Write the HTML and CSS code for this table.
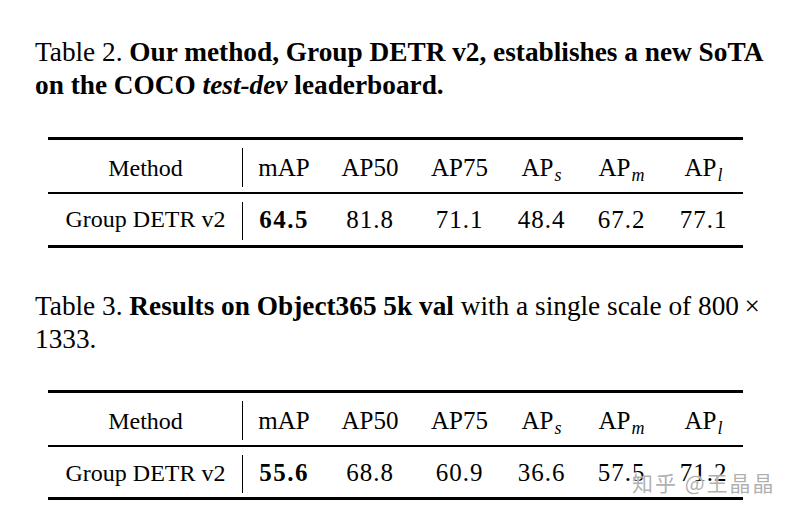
FILE: index.html
```html
<!DOCTYPE html>
<html lang="en">
<head>
<meta charset="utf-8">
<title>Group DETR v2 results</title>
<link rel="stylesheet" href="styles.css">
</head>
<body>
<main class="page">
  <section class="figure">
    <p class="caption">Table 2. <b>Our method, Group DETR v2, establishes a new SoTA<br>on the COCO <i>test-dev</i> leaderboard.</b></p>
    <div class="results">
      <div class="row head">
        <div class="cell method">Method</div>
        <div class="cell num">mAP</div>
        <div class="cell num">AP50</div>
        <div class="cell num">AP75</div>
        <div class="cell num">AP<sub>s</sub></div>
        <div class="cell num">AP<sub>m</sub></div>
        <div class="cell num">AP<sub>l</sub></div>
      </div>
      <div class="row body">
        <div class="cell method">Group DETR v2</div>
        <div class="cell num best">64.5</div>
        <div class="cell num">81.8</div>
        <div class="cell num">71.1</div>
        <div class="cell num">48.4</div>
        <div class="cell num">67.2</div>
        <div class="cell num">77.1</div>
      </div>
    </div>
  </section>

  <section class="figure second">
    <p class="caption">Table 3. <b>Results on Object365 5k val</b> with a single scale of 800&thinsp;×<br>1333.</p>
    <div class="results">
      <div class="row head">
        <div class="cell method">Method</div>
        <div class="cell num">mAP</div>
        <div class="cell num">AP50</div>
        <div class="cell num">AP75</div>
        <div class="cell num">AP<sub>s</sub></div>
        <div class="cell num">AP<sub>m</sub></div>
        <div class="cell num">AP<sub>l</sub></div>
      </div>
      <div class="row body short">
        <div class="cell method">Group DETR v2</div>
        <div class="cell num best">55.6</div>
        <div class="cell num">68.8</div>
        <div class="cell num">60.9</div>
        <div class="cell num">36.6</div>
        <div class="cell num">57.5</div>
        <div class="cell num">71.2</div>
      </div>
    </div>
  </section>

  <div class="watermark">知乎 @王晶晶</div>
</main>
</body>
</html>
```

FILE: styles.css
```css
html, body {
  margin: 0;
  padding: 0;
  background: #fff;
}

.page {
  position: relative;
  width: 802px;
  height: 518px;
  padding-top: 36px;
  box-sizing: border-box;
  overflow: hidden;
  color: #000;
  font-family: "Liberation Serif", "Times New Roman", serif;
}

.figure {
  margin: 0;
}

.figure.second {
  margin-top: 42px;
}

.caption {
  margin: 0 0 0 35px;
  font-size: 27.3px;
  line-height: 33px;
  white-space: nowrap;
}

.caption b {
  font-weight: bold;
}

.results {
  margin: 35px 0 0 48px;
  width: 695px;
  border-top: 3px solid #000;
  border-bottom: 3px solid #000;
}

.figure.second .results {
  margin-top: 34px;
}

.row {
  display: grid;
  grid-template-columns: 195px 82px 90px 89px 75px 85px 79px;
}

.row.head {
  height: 52px;
  border-bottom: 2px solid #000;
}

.row.body {
  height: 51px;
}

.row.body.short {
  height: 50px;
}

.cell {
  text-align: center;
  white-space: nowrap;
}

.head .cell {
  line-height: 52px;
  padding-top: 2px;
  height: 52px;
  box-sizing: border-box;
}

.body .cell {
  line-height: 51px;
}

.body.short .cell {
  line-height: 50px;
  padding-top: 1px;
}

.method {
  font-size: 24px;
  background: linear-gradient(#000, #000) right 0 top 8px / 1px calc(100% - 13px) no-repeat;
}

.head .method {
  background-position: right 0 top 8px;
  background-size: 1px 39px;
}

.body .method {
  background-position: right 0 top 8px;
  background-size: 1px 38px;
}

.num {
  font-size: 25px;
  letter-spacing: 1px;
}

.head .num {
  letter-spacing: 0;
}

.num.best {
  font-weight: bold;
  letter-spacing: 1.5px;
}

.num sub {
  font-size: 18px;
  font-style: italic;
  line-height: 0;
  vertical-align: -5px;
  letter-spacing: 0;
  margin-left: 1px;
}

.watermark {
  position: absolute;
  left: 632px;
  top: 467px;
  font-family: "Noto Sans CJK SC", "Noto Sans", sans-serif;
  font-size: 21px;
  line-height: 30px;
  letter-spacing: 2px;
  color: rgba(150, 150, 150, 0.75);
  text-shadow: 0 0 2px #fff, 0 0 1px #fff;
  white-space: nowrap;
}
```
